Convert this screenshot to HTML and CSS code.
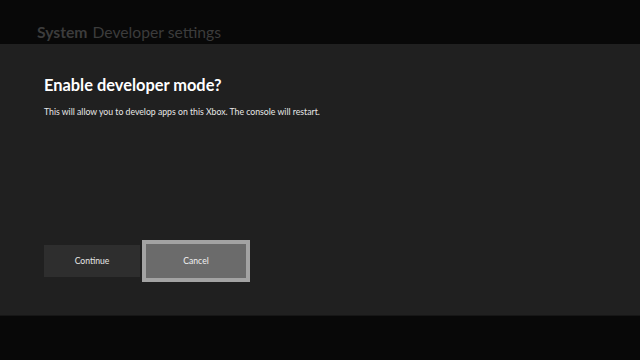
FILE: index.html
```html
<!DOCTYPE html>
<html lang="en">
<head>
  <meta charset="UTF-8">
  <title>Developer settings</title>
  <link rel="stylesheet" href="styles.css">
</head>
<body>
  <div class="screen">
    <header class="top-bar">
      <span class="crumb-main">System</span>
      <span class="crumb-sub">Developer settings</span>
    </header>

    <section class="dialog">
      <h1 class="dialog-title">Enable developer mode?</h1>
      <p class="dialog-text">This will allow you to develop apps on this Xbox. The console will restart.</p>

      <div class="dialog-actions">
        <button class="btn">Continue</button>
        <button class="btn btn-focused">Cancel</button>
      </div>
    </section>

    <footer class="bottom-bar"></footer>
  </div>
</body>
</html>
```

FILE: styles.css
```css
:root {
  --bg-dark: #080808;
  --panel-bg: #202020;
  --text-primary: #ffffff;
  --text-muted: #3c3c3c;
  --button-bg: #2e2e2e;
  --focus-bg: #6b6b6b;
  --focus-border: #a3a3a3;
}

* {
  box-sizing: border-box;
  margin: 0;
  padding: 0;
}

body {
  font-family: 'Lato', 'Open Sans', sans-serif;
  background-color: var(--bg-dark);
  color: var(--text-primary);
}

.screen {
  width: 640px;
  height: 360px;
  display: flex;
  flex-direction: column;
}

.top-bar {
  height: 44px;
  padding: 20px 0 0 37px;
  font-size: 15.7px;
  line-height: 24px;
  color: var(--text-muted);
  white-space: nowrap;
}

.crumb-main {
  font-weight: 700;
  margin-right: 1px;
}

.crumb-sub {
  font-weight: 400;
}

.dialog {
  height: 272px;
  background-color: var(--panel-bg);
  border-bottom: 1px solid #161616;
  padding: 29px 0 0 44px;
}

.dialog-title {
  font-size: 16.4px;
  font-weight: 700;
  line-height: 24px;
}

.dialog-text {
  margin-top: 9px;
  font-size: 8.7px;
  line-height: 12px;
  color: #e8e8e8;
}

.dialog-actions {
  display: flex;
  align-items: center;
  gap: 2px;
  margin-top: 122px;
}

.btn {
  width: 96px;
  height: 32px;
  border: none;
  background-color: var(--button-bg);
  color: #e6e6e6;
  font-family: inherit;
  font-size: 8.6px;
}

.btn-focused {
  width: 108px;
  height: 42px;
  background-color: var(--focus-bg);
  border: 4px solid var(--focus-border);
  color: #f2f2f2;
}

.bottom-bar {
  flex: 1;
}
```
